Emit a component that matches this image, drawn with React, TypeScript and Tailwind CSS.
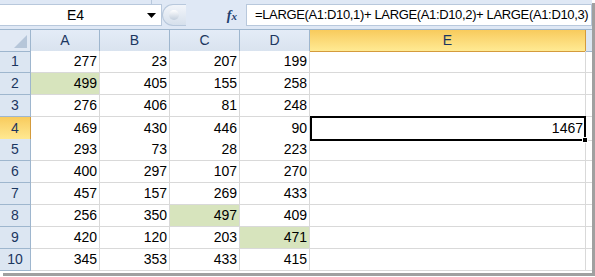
const cols = ["A", "B", "C", "D", "E"];

const data: number[][] = [
  [277, 23, 207, 199],
  [499, 405, 155, 258],
  [276, 406, 81, 248],
  [469, 430, 446, 90],
  [293, 73, 28, 223],
  [400, 297, 107, 270],
  [457, 157, 269, 433],
  [256, 350, 497, 409],
  [420, 120, 203, 471],
  [345, 353, 433, 415],
];

// cells holding the top three values
const green = new Set(["1-0", "7-2", "8-3"]);

const font = { fontFamily: '"Liberation Sans", Arial, sans-serif' };

function FormulaBar() {
  return (
    <div className="flex h-[30px] flex-col bg-[#dfe8f5]">
      <div className="flex h-[4px]">
        <div className="w-[152px] border-r border-[#b8c8dc]" />
      </div>
      <div className="flex h-[22px]">
        <div className="relative flex w-[162px] shrink-0 items-center justify-center border-y border-r border-[#b8c8dc] bg-white text-[14px] text-black">
          <span className="ml-[-10px]">E4</span>
          <svg className="absolute right-[5px] top-[8px]" width="9" height="5" viewBox="0 0 9 5">
            <path d="M0 0H9L4.5 5Z" fill="#000" />
          </svg>
        </div>
        <div className="flex w-[84px] shrink-0 items-center">
          <div className="h-[22px] w-[24px] rounded-l-full border-y border-l border-[#b8c8dc] bg-gradient-to-b from-[#f2f5fa] to-[#d6e0ec]">
            <div className="ml-[6px] mt-[5px] h-[10px] w-[10px] rounded-full bg-gradient-to-b from-[#ffffff] to-[#c2cedc]" />
          </div>
          <div className="flex-1" />
          <span className="mr-[9px] text-[14px] italic font-bold text-[#1f3f6f]" style={{ fontFamily: '"Liberation Serif", serif' }}>
            f<span className="text-[11px]">x</span>
          </span>
        </div>
        <div className="flex min-w-0 flex-1 items-center overflow-hidden whitespace-nowrap border border-[#b8c8dc] bg-white pl-[8px] text-[13px] tracking-[-0.35px] text-black">
          =LARGE(A1:D10,1)+ LARGE(A1:D10,2)+ LARGE(A1:D10,3)
        </div>
      </div>
      <div className="h-[4px] border-b border-[#9eb6ce]" />
    </div>
  );
}

const grid = "grid grid-cols-[31px_69px_70px_70px_70px_276px_6px]";

function HeaderRow() {
  return (
    <div className={`${grid} h-[21px]`}>
      <div className="relative border-b border-r border-[#9eb6ce] bg-[#e1e9f4]">
        <svg className="absolute bottom-[3px] right-[3px]" width="13" height="13" viewBox="0 0 13 13">
          <path d="M13 0V13H0Z" fill="#b6c6d9" />
        </svg>
      </div>
      {cols.map((c) =>
        c === "E" ? (
          <div
            key={c}
            className="flex items-center justify-center border-b border-r border-[#d49b3c] bg-gradient-to-b from-[#f8cb5c] to-[#ffea93] text-[14px] text-[#1b365f]"
          >
            {c}
          </div>
        ) : (
          <div
            key={c}
            className="flex items-center justify-center border-b border-r border-[#9eb6ce] bg-gradient-to-b from-[#e4ecf7] to-[#d9e3ef] text-[14px] text-[#1b365f]"
          >
            {c}
          </div>
        )
      )}
      <div className="border-b border-[#9eb6ce] bg-[#dce6f2]" />
    </div>
  );
}

function Row({ r }: { r: number }) {
  const active = r === 3;
  return (
    <div className={`${grid} h-[22px]`}>
      {active ? (
        <div className="flex items-center justify-center border-b border-r border-[#d49b3c] bg-gradient-to-b from-[#f8cb5c] to-[#ffea93] text-[14px] text-[#1b365f]">
          {r + 1}
        </div>
      ) : (
        <div className="flex items-center justify-center border-b border-r border-[#9eb6ce] bg-[#dce6f2] text-[14px] text-[#1b365f]">
          {r + 1}
        </div>
      )}
      {data[r].map((v, c) => (
        <div
          key={c}
          className={`flex items-center justify-end border-b border-r border-[#d9d9d9] pr-[2px] text-[14px] text-black ${
            green.has(`${r}-${c}`) ? "bg-[#d7e4bd]" : "bg-white"
          }`}
        >
          {v}
        </div>
      ))}
      {active ? (
        <div className="relative mt-[-1px] flex items-center justify-end border-2 border-black pr-[1px] text-[14px] text-black">
          1467
          <div className="absolute bottom-[-4px] right-[-4px] h-[6px] w-[6px] border border-white bg-black" />
        </div>
      ) : (
        <div className="border-b border-r border-[#d9d9d9]" />
      )}
      <div className="border-b border-[#d9d9d9]" />
    </div>
  );
}

export default function App() {
  return (
    <div className="h-[277px] w-[595px] overflow-hidden bg-white" style={font}>
      <div className="w-[592px] shadow-[3px_3px_0_#a0a0a0]">
        <FormulaBar />
        <HeaderRow />
        {data.map((_, r) => (
          <Row key={r} r={r} />
        ))}
        <div className="h-[2px] bg-white" />
      </div>
    </div>
  );
}
